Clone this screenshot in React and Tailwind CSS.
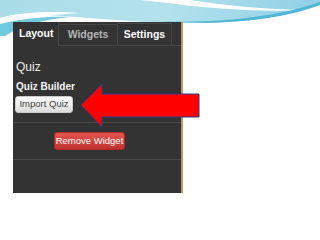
import React from "react";

const Wave = () => (
  <svg className="absolute left-0 top-0" width="320" height="40" viewBox="0 0 320 40">
    <defs>
      <linearGradient id="sky" x1="0" y1="0" x2="1" y2="0">
        <stop offset="0" stopColor="#a9dde8" />
        <stop offset="0.5" stopColor="#b4e2ec" />
        <stop offset="1" stopColor="#8fd0e6" />
      </linearGradient>
    </defs>
    <path d="M0 0 H320 V3 C295 16 250 22 200 23 C140 24 80 16 40 15 C20 15 8 17 0 19 Z" fill="url(#sky)" />
    <path d="M0 18 C20 12 50 11 80 13 C60 14 30 17 0 24 Z" fill="#ffffff" />
    <path d="M0 24 C25 18 50 16 70 17 C40 20 20 26 5 36 L0 36 Z" fill="#6fcadb" />
    <path d="M140 0 H190 C220 5 260 9 305 10 C260 12 215 9 175 4 C160 2 150 1 140 0 Z" fill="#ffffff" />
    <path d="M160 21 C220 24 280 16 320 2 V5 C280 20 220 26 160 21 Z" fill="#4fb6d6" />
  </svg>
);

const Arrow = () => (
  <svg className="absolute left-0 top-0" width="320" height="240" viewBox="0 0 320 240">
    <polygon
      points="81,105 102,84 102,94 199,94 199,117 102,117 102,127"
      fill="#ff0000"
      stroke="#2f3d86"
      strokeWidth="1"
    />
  </svg>
);

export default function App() {
  return (
    <div
      className="relative w-[320px] h-[240px] overflow-hidden bg-white"
      style={{ fontFamily: '"Liberation Sans", Arial, sans-serif' }}
    >
      <Wave />
      <div className="relative ml-[13px] mt-[22px] w-[170px] h-[171px] bg-[#333333] border-r-[2px] border-[#b99a66]">
        <div className="flex items-end h-[24px]">
          <div className="w-[46px] h-[24px] border-r border-[#474747] flex items-center pl-[6px] text-[10.5px] font-bold text-white">
            Layout
          </div>
          <div className="w-[58px] h-[22px] border-t border-b border-[#474747] flex items-center justify-center text-[10.5px] font-bold text-[#b5b5b5]">
            Widgets
          </div>
          <div className="w-[55px] h-[23px] border-l border-r border-t border-b border-[#474747] flex items-center justify-center text-[10.5px] font-bold text-white">
            Settings
          </div>
          <div className="flex-1 h-[24px] border-b border-[#474747]" />
        </div>
        <div className="pl-[3px] mt-[14px] text-[12px] leading-[14px] text-[#f0f0f0]">Quiz</div>
        <div className="pl-[3px] mt-[7px] text-[10px] leading-[12px] font-bold text-[#f5f5f5]">Quiz Builder</div>
        <button className="ml-[2px] mt-[3px] w-[58px] h-[17px] rounded-[3px] bg-gradient-to-b from-[#ffffff] to-[#dcdcdc] border border-[#c8c8c8] text-[9.5px] text-[#444] flex items-center justify-center">
          Import Quiz
        </button>
        <div className="mt-[9px] h-px bg-[#4a4a4a]" />
        <button className="ml-[41px] mt-[9px] w-[71px] h-[18px] rounded-[3px] bg-gradient-to-b from-[#e25550] to-[#c2322e] border border-[#b02a26] text-[9.5px] text-white flex items-center justify-center">
          Remove Widget
        </button>
        <div className="mt-[9px] h-px bg-[#4a4a4a]" />
      </div>
      <Arrow />
    </div>
  );
}
